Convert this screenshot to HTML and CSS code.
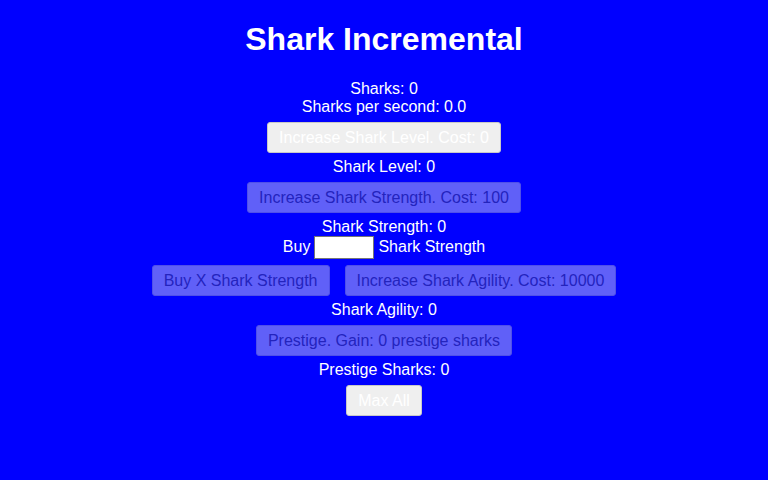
FILE: index.html
```html
<!DOCTYPE html>
<html lang="en">
<head>
<meta charset="utf-8">
<title>Shark Incremental</title>
<link rel="stylesheet" href="styles.css">
</head>
<body>
<h1 class="title">Shark Incremental</h1>
<main class="game">
  <div class="line">Sharks: 0</div>
  <div class="line">Sharks per second: 0.0</div>
  <div class="row"><button class="btn">Increase Shark Level. Cost: 0</button></div>
  <div class="line">Shark Level: 0</div>
  <div class="row"><button class="btn" disabled>Increase Shark Strength. Cost: 100</button></div>
  <div class="line">Shark Strength: 0</div>
  <div class="line buy">Buy <input class="amount" type="text"> Shark Strength</div>
  <div class="row">
    <button class="btn" disabled>Buy X Shark Strength</button>
    <button class="btn" disabled>Increase Shark Agility. Cost: 10000</button>
  </div>
  <div class="line">Shark Agility: 0</div>
  <div class="row"><button class="btn" disabled>Prestige. Gain: 0 prestige sharks</button></div>
  <div class="line">Prestige Sharks: 0</div>
  <div class="row"><button class="btn">Max All</button></div>
</main>
</body>
</html>
```
FILE: styles.css
```css
body {
  margin: 8px;
  background: #0000ff;
  color: #ffffff;
  font-family: "Liberation Sans", Arial, sans-serif;
  font-size: 16px;
  text-align: center;
}
.title {
  font-size: 32px;
  font-weight: bold;
  margin: 13.44px 0 21.44px;
  line-height: 37px;
}
.game {
  display: flex;
  flex-direction: column;
  align-items: center;
}
.line {
  line-height: 18px;
  height: 18px;
}
.line.buy {
  height: 23px;
  display: flex;
  align-items: center;
  gap: 4px;
}
.amount {
  width: 60px;
  height: 23px;
  box-sizing: border-box;
  border: 1px solid #767676;
  background: #ffffff;
  font-family: inherit;
  font-size: 16px;
  padding: 1px 2px;
  margin: 0;
}
.row {
  display: flex;
  justify-content: center;
  gap: 15px;
  margin: 6px 0 5px;
}
.btn {
  font-family: "Liberation Sans", Arial, sans-serif;
  font-size: 16px;
  line-height: 19px;
  padding: 5px 11px;
  border: 1px solid #c8c8c8;
  border-radius: 3px;
  background: #efefef;
  color: #ffffff;
  margin: 0;
}
.btn:disabled {
  opacity: 0.4;
  color: #5a5a5a;
}
```
